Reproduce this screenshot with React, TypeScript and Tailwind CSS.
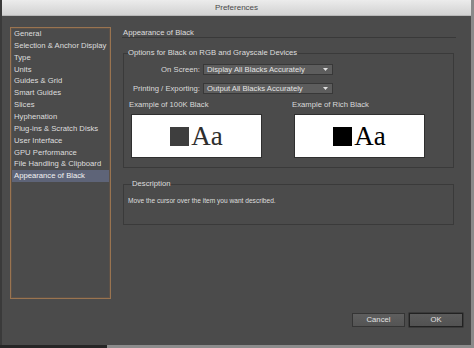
import React from "react";

const items = [
  "General",
  "Selection & Anchor Display",
  "Type",
  "Units",
  "Guides & Grid",
  "Smart Guides",
  "Slices",
  "Hyphenation",
  "Plug-ins & Scratch Disks",
  "User Interface",
  "GPU Performance",
  "File Handling & Clipboard",
  "Appearance of Black",
];

function Select({ value }: { value: string }) {
  return (
    <div className="w-[130px] h-[11px] flex items-center justify-between bg-[#5d5d5d] border border-[#383838] pl-[3px] pr-[4px] text-[#e4e4e4] leading-[10px]">
      <span>{value}</span>
      <svg width="5" height="3" viewBox="0 0 5 3">
        <path d="M0 0 L5 0 L2.5 3 Z" fill="#e0e0e0" />
      </svg>
    </div>
  );
}

function Example({ label, sq, fg }: { label: string; sq: string; fg: string }) {
  return (
    <div className="flex flex-col">
      <div className="leading-[10px] h-[10px] text-[#dadada]">{label}</div>
      <div className="mt-[4px] ml-[2px] w-[131px] h-[44px] bg-white border border-[#2f2f2f] flex items-center justify-center gap-[2px]">
        <div className="w-[19px] h-[19px]" style={{ backgroundColor: sq }} />
        <span
          className="text-[27px] leading-none"
          style={{ fontFamily: '"Liberation Serif", "Times New Roman", serif', color: fg }}
        >
          Aa
        </span>
      </div>
    </div>
  );
}

export default function App() {
  return (
    <div
      className="w-[474px] h-[348px] flex flex-col bg-[#4b4b4b] overflow-hidden text-[7.7px]"
      style={{ fontFamily: '"Liberation Sans", Arial, sans-serif' }}
    >
      <div className="flex-1 flex flex-row">
        <div className="w-[2px] bg-[#3a3a3a]" />
        <div className="flex-1 flex flex-col">
          {/* Title bar */}
          <div className="h-[16px] bg-gradient-to-b from-[#ececec] to-[#d2d2d2] border-b border-[#b8b8b8] flex items-center justify-center text-[8px] text-[#4a4a4a]">
            Preferences
          </div>
          {/* Body */}
          <div className="flex-1 flex flex-col">
            <div className="flex flex-row mt-[11px] h-[272px]">
              {/* Left list */}
              <div className="ml-[8px] w-[101px] h-[272px] border border-[#9a7450] shadow-[inset_0_0_0_1px_#5c5148] px-[1px]">
                {items.map((it, i) => {
                  const sel = i === items.length - 1;
                  return (
                    <div
                      key={it}
                      className={
                        sel
                          ? "h-[11.86px] leading-[11.86px] pl-[2px] bg-[#5e6478] text-[#f2f2f2] whitespace-nowrap"
                          : "h-[11.86px] leading-[11.86px] pl-[2px] text-[#dedede] whitespace-nowrap"
                      }
                    >
                      {it}
                    </div>
                  );
                })}
              </div>
              {/* Right panel */}
              <div className="ml-[11px] w-[334px] flex flex-col">
                <div className="h-[11px] leading-[12px] pl-[1px] border-b border-[#393939] text-[#dedede]">
                  Appearance of Black
                </div>
                <fieldset className="mt-[9px] ml-[1px] w-[331px] border border-[#3a3a3a] pb-[9px]">
                  <legend className="ml-[4px] px-0 leading-[12px] text-[#dedede]">
                    Options for Black on RGB and Grayscale Devices
                  </legend>
                  <div className="mt-[5px] flex flex-row items-center">
                    <div className="w-[76px] text-right text-[#dadada] leading-[10px]">On Screen:</div>
                    <div className="ml-[3px]">
                      <Select value="Display All Blacks Accurately" />
                    </div>
                  </div>
                  <div className="mt-[8px] flex flex-row items-center">
                    <div className="w-[76px] text-right text-[#dadada] leading-[10px]">Printing / Exporting:</div>
                    <div className="ml-[3px]">
                      <Select value="Output All Blacks Accurately" />
                    </div>
                  </div>
                  <div className="mt-[6px] ml-[5px] flex flex-row">
                    <div className="w-[163px]">
                      <Example label="Example of 100K Black" sq="#3e3e3e" fg="#2e2e2e" />
                    </div>
                    <Example label="Example of Rich Black" sq="#000000" fg="#000000" />
                  </div>
                </fieldset>
                <fieldset className="mt-[10px] ml-[1px] w-[331px] border border-[#3a3a3a] pl-[4px] pb-[18px]">
                  <legend className="ml-[4px] px-0 leading-[12px] text-[#dedede]">Description</legend>
                  <div className="mt-[6px] leading-[10px] text-[6.6px] text-[#dedede]">
                    Move the cursor over the item you want described.
                  </div>
                </fieldset>
              </div>
            </div>
            {/* Buttons */}
            <div className="mt-[14px] flex flex-row justify-end pr-[8px] gap-[4px]">
              <button className="w-[53px] h-[14px] bg-gradient-to-b from-[#5e5e5e] to-[#545454] border border-[#353535] text-[#e2e2e2] leading-[12px]">
                Cancel
              </button>
              <button className="w-[54px] h-[14px] bg-gradient-to-b from-[#5b5b5b] to-[#525252] border border-[#222222] shadow-[0_0_0_0.5px_#2a2a2a] text-[#e2e2e2] leading-[12px]">
                OK
              </button>
            </div>
          </div>
        </div>
        <div className="w-[3px] bg-[#8a8a8a]" />
      </div>
      <div className="h-[3px] flex flex-row">
        <div className="w-[107px] bg-[#262626]" />
        <div className="flex-1 bg-[#8c8c8c]" />
      </div>
    </div>
  );
}
